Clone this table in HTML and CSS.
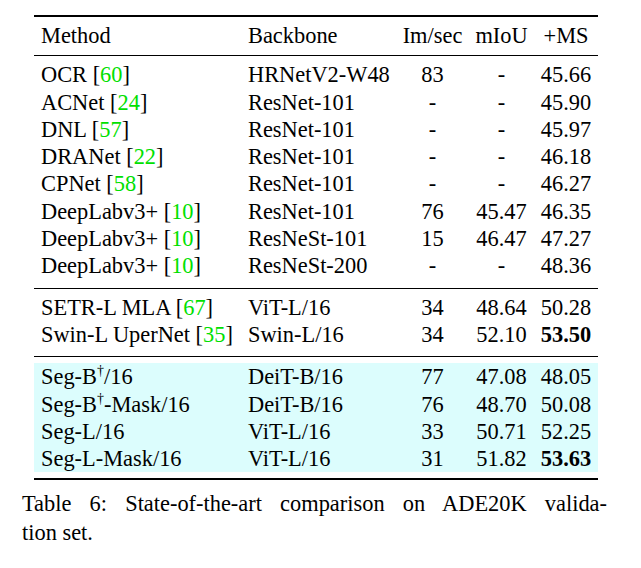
FILE: index.html
```html
<!DOCTYPE html>
<html>
<head>
<meta charset="utf-8">
<link rel="stylesheet" href="styles.css">
</head>
<body>
<div class="table">
  <div class="section head">
    <div class="row">
      <div class="c l">Method</div><div class="c l">Backbone</div><div class="c">Im/sec</div><div class="c">mIoU</div><div class="c">+MS</div>
    </div>
  </div>
  <div class="section">
    <div class="row"><div class="c l">OCR [<span class="ref">60</span>]</div><div class="c l">HRNetV2-W48</div><div class="c">83</div><div class="c">-</div><div class="c">45.66</div></div>
    <div class="row"><div class="c l">ACNet [<span class="ref">24</span>]</div><div class="c l">ResNet-101</div><div class="c">-</div><div class="c">-</div><div class="c">45.90</div></div>
    <div class="row"><div class="c l">DNL [<span class="ref">57</span>]</div><div class="c l">ResNet-101</div><div class="c">-</div><div class="c">-</div><div class="c">45.97</div></div>
    <div class="row"><div class="c l">DRANet [<span class="ref">22</span>]</div><div class="c l">ResNet-101</div><div class="c">-</div><div class="c">-</div><div class="c">46.18</div></div>
    <div class="row"><div class="c l">CPNet [<span class="ref">58</span>]</div><div class="c l">ResNet-101</div><div class="c">-</div><div class="c">-</div><div class="c">46.27</div></div>
    <div class="row"><div class="c l">DeepLabv3+ [<span class="ref">10</span>]</div><div class="c l">ResNet-101</div><div class="c">76</div><div class="c">45.47</div><div class="c">46.35</div></div>
    <div class="row"><div class="c l">DeepLabv3+ [<span class="ref">10</span>]</div><div class="c l">ResNeSt-101</div><div class="c">15</div><div class="c">46.47</div><div class="c">47.27</div></div>
    <div class="row"><div class="c l">DeepLabv3+ [<span class="ref">10</span>]</div><div class="c l">ResNeSt-200</div><div class="c">-</div><div class="c">-</div><div class="c">48.36</div></div>
  </div>
  <div class="section">
    <div class="row"><div class="c l">SETR-L MLA [<span class="ref">67</span>]</div><div class="c l">ViT-L/16</div><div class="c">34</div><div class="c">48.64</div><div class="c">50.28</div></div>
    <div class="row"><div class="c l">Swin-L UperNet [<span class="ref">35</span>]</div><div class="c l">Swin-L/16</div><div class="c">34</div><div class="c">52.10</div><div class="c"><b>53.50</b></div></div>
  </div>
  <div class="section hl">
    <div class="row"><div class="c l">Seg-B<sup>†</sup>/16</div><div class="c l">DeiT-B/16</div><div class="c">77</div><div class="c">47.08</div><div class="c">48.05</div></div>
    <div class="row"><div class="c l">Seg-B<sup>†</sup>-Mask/16</div><div class="c l">DeiT-B/16</div><div class="c">76</div><div class="c">48.70</div><div class="c">50.08</div></div>
    <div class="row"><div class="c l">Seg-L/16</div><div class="c l">ViT-L/16</div><div class="c">33</div><div class="c">50.71</div><div class="c">52.25</div></div>
    <div class="row"><div class="c l">Seg-L-Mask/16</div><div class="c l">ViT-L/16</div><div class="c">31</div><div class="c">51.82</div><div class="c"><b>53.63</b></div></div>
  </div>
</div>
<div class="caption">
  <span class="line1">Table 6: State-of-the-art comparison on ADE20K valida-</span>
  <span class="line2">tion set.</span>
</div>
</body>
</html>
```

FILE: styles.css
```css
html, body {
  margin: 0;
  padding: 0;
  background: #ffffff;
}
body {
  font-family: "Liberation Serif", "Tinos", "Nimbus Roman", "DejaVu Serif", serif;
  font-size: 22.4px;
  color: #000000;
}
.table {
  margin: 15px 0 0 34px;
  width: 564px;
  border-top: 2px solid #000;
  border-bottom: 2px solid #000;
}
.section {
  padding: 5px 0 8px;
  border-bottom: 1px solid #000;
}
.head {
  padding: 5px 0 6px;
}
.hl {
  padding: 6px 0 6px;
  border-bottom: none;
}
.row {
  display: grid;
  grid-template-columns: 207px 155px 73px 65px 64px;
  line-height: 27.3px;
  height: 27.3px;
}
.hl .row {
  background: #dcfdfd;
}
.c {
  text-align: center;
  white-space: nowrap;
}
.c.l {
  text-align: left;
  padding-left: 7px;
}
.ref {
  color: #00e000;
}
sup {
  font-size: 14px;
  line-height: 0;
  vertical-align: 9px;
}
b {
  font-weight: bold;
}
.caption {
  margin: 9px 0 0 22px;
  width: 585px;
  line-height: 29px;
}
.line1 {
  display: block;
  text-align: justify;
  text-align-last: justify;
}
.line2 {
  display: block;
}
```
